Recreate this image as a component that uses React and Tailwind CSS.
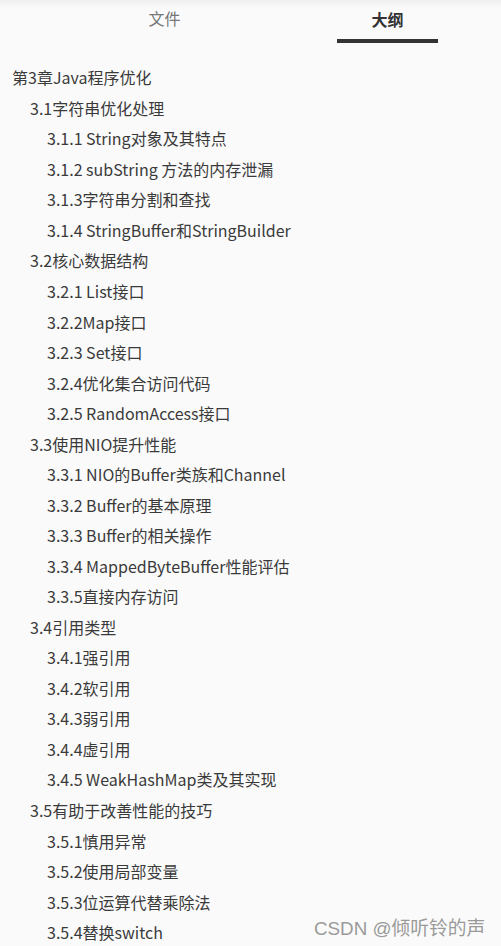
import React, { useState } from "react";

const outline = [
  [0, "第3章Java程序优化"],
  [1, "3.1字符串优化处理"],
  [2, "3.1.1 String对象及其特点"],
  [2, "3.1.2 subString 方法的内存泄漏"],
  [2, "3.1.3字符串分割和查找"],
  [2, "3.1.4 StringBuffer和StringBuilder"],
  [1, "3.2核心数据结构"],
  [2, "3.2.1 List接口"],
  [2, "3.2.2Map接口"],
  [2, "3.2.3 Set接口"],
  [2, "3.2.4优化集合访问代码"],
  [2, "3.2.5 RandomAccess接口"],
  [1, "3.3使用NIO提升性能"],
  [2, "3.3.1 NIO的Buffer类族和Channel"],
  [2, "3.3.2 Buffer的基本原理"],
  [2, "3.3.3 Buffer的相关操作"],
  [2, "3.3.4 MappedByteBuffer性能评估"],
  [2, "3.3.5直接内存访问"],
  [1, "3.4引用类型"],
  [2, "3.4.1强引用"],
  [2, "3.4.2软引用"],
  [2, "3.4.3弱引用"],
  [2, "3.4.4虚引用"],
  [2, "3.4.5 WeakHashMap类及其实现"],
  [1, "3.5有助于改善性能的技巧"],
  [2, "3.5.1慎用异常"],
  [2, "3.5.2使用局部变量"],
  [2, "3.5.3位运算代替乘除法"],
  [2, "3.5.4替换switch"],
];

const indent = ["pl-[12px]", "pl-[30px]", "pl-[47px]"];

function App() {
  const [tab, setTab] = useState("outline");

  return (
    <div
      className="relative h-[946px] w-[501px] overflow-hidden bg-[#fafafa] text-[#3a3a3a]"
      style={{ fontFamily: '"Segoe UI", "Noto Sans CJK SC", "Noto Sans", sans-serif' }}
    >
      <div className="bg-gradient-to-b from-[#efefef] to-[#fafafa] h-[8px]" />
      {/* tabs */}
      <div className="flex pl-[114px] gap-[122px] -mt-[8px]">
        <button
          onClick={() => setTab("file")}
          className={
            "w-[101px] h-[44px] flex flex-col items-center text-[16px] " +
            (tab === "file" ? "font-bold text-[#333]" : "text-[#777]")
          }
        >
          <span className="h-[39px] pb-[3px] flex items-center">文件</span>
          <span className={"h-[4px] w-full " + (tab === "file" ? "bg-[#333]" : "")} />
        </button>
        <button
          onClick={() => setTab("outline")}
          className={
            "w-[101px] h-[44px] flex flex-col items-center text-[16px] " +
            (tab === "outline" ? "font-bold text-[#333]" : "text-[#777]")
          }
        >
          <span className="h-[39px] pb-[1px] flex items-center">大纲</span>
          <span className={"h-[4px] w-full " + (tab === "outline" ? "bg-[#333]" : "")} />
        </button>
      </div>

      <ul className="mt-[18px]">
        {outline.map(([lvl, text], i) => (
          <li
            key={i}
            className={"h-[30.54px] flex items-center text-[16px] whitespace-nowrap " + indent[lvl]}
          >
            {text}
          </li>
        ))}
      </ul>

      <div
        className="absolute left-[314px] bottom-[6px] text-[18.8px] leading-[22px] text-[#9a9a9a] whitespace-nowrap"
        style={{ fontFamily: '"Liberation Sans", "Noto Sans CJK SC", sans-serif' }}
      >
        CSDN @倾听铃的声
      </div>
    </div>
  );
}

export default App;
